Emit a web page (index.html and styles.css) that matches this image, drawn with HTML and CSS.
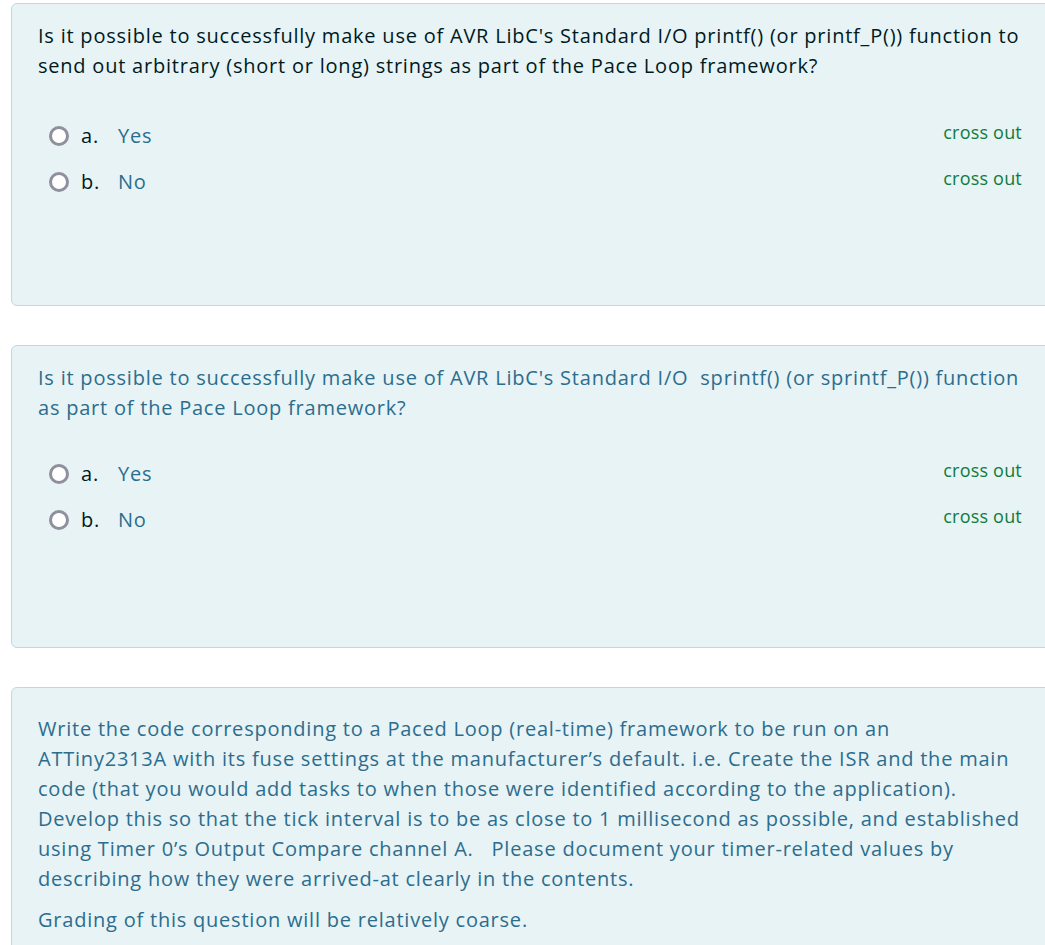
FILE: index.html
```html
<!DOCTYPE html>
<html lang="en">
<head>
<meta charset="UTF-8">
<meta name="viewport" content="width=device-width, initial-scale=1.0">
<title>Quiz</title>
<link rel="stylesheet" href="styles.css">
</head>
<body>
    <div class="que">
        <div class="qtext">
            <p>Is it possible to successfully make use of AVR LibC's Standard I/O printf() (or printf_P()) function to send out arbitrary (short or long) strings as part of the Pace Loop framework?</p>
        </div>
        <div class="answer">
            <div class="option">
                <input type="radio" name="q1">
                <span class="answernumber">a.</span>
                <span class="answertext">Yes</span>
                <a class="crossout">cross out</a>
            </div>
            <div class="option">
                <input type="radio" name="q1">
                <span class="answernumber">b.</span>
                <span class="answertext">No</span>
                <a class="crossout">cross out</a>
            </div>
        </div>
    </div>

    <div class="que">
        <div class="qtext info">
            <p>Is it possible to successfully make use of AVR LibC's Standard I/O&nbsp; sprintf() (or sprintf_P()) function as part of the Pace Loop framework?</p>
        </div>
        <div class="answer compact">
            <div class="option">
                <input type="radio" name="q2">
                <span class="answernumber">a.</span>
                <span class="answertext">Yes</span>
                <a class="crossout">cross out</a>
            </div>
            <div class="option">
                <input type="radio" name="q2">
                <span class="answernumber">b.</span>
                <span class="answertext">No</span>
                <a class="crossout">cross out</a>
            </div>
        </div>
    </div>

    <div class="que essay">
        <div class="qtext info">
            <p>Write the code corresponding to a Paced Loop (real-time) framework to be run on an ATTiny2313A with its fuse settings at the manufacturer’s default. i.e. Create the ISR and the main code (that you would add tasks to when those were identified according to the application). Develop this so that the tick interval is to be as close to 1 millisecond as possible, and established using Timer 0’s Output Compare channel A.&nbsp;&nbsp; Please document your timer-related values by describing how they were arrived-at clearly in the contents.</p>
            <p>Grading of this question will be relatively coarse.</p>
        </div>
    </div>
</body>
</html>
```

FILE: styles.css
```css
body {
    font-family: "Open Sans", "Noto Sans", sans-serif;
    font-size: 20px;
    line-height: 30px;
    letter-spacing: 0.78px;
    color: #001a1e;
    background: #fff;
    margin: 0;
    padding-top: 3px;
    overflow-x: hidden;
}
.que {
    background: #e7f3f5;
    border: 1px solid #b8dce2;
    border-radius: 6px;
    margin: 0 -30px 39px 11px;
    padding: 17px 52px 100px 26px;
}
.qtext p {
    margin: 0;
}
.info {
    color: #2c6d8e;
}
.essay {
    padding-top: 26px;
}
.essay .qtext p + p {
    margin-top: 11px;
}
.answer {
    margin-top: 32px;
}
.answer.compact {
    margin-top: 28px;
    margin-bottom: 4px;
}
.option {
    display: flex;
    align-items: center;
    height: 46px;
}
.option input {
    appearance: none;
    width: 20px;
    height: 20px;
    margin: 0 12px 0 11px;
    border: 3px solid #8f8f9d;
    border-radius: 50%;
    background: #fff;
}
.answernumber {
    width: 37px;
}
.answertext {
    flex: 1;
    color: #2c6d8e;
}
.crossout {
    font-size: 18px;
    letter-spacing: 0.2px;
    color: #0f7b3c;
    margin-top: -8px;
}
```
